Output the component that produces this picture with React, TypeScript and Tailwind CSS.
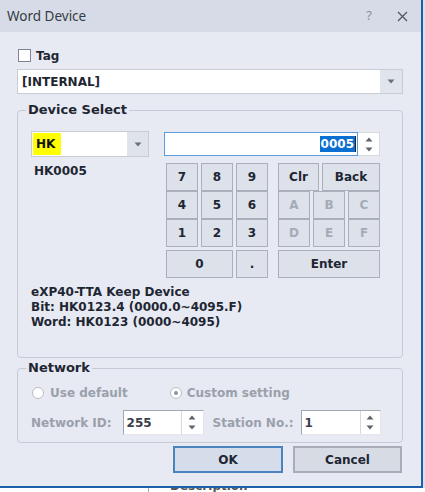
import React from "react";

const Down = ({ c = "#6b6f77" }: { c?: string }) => (
  <svg width="8" height="5" viewBox="0 0 8 5"><path d="M0.5 0.5 L7.5 0.5 L4 4.5 Z" fill={c} /></svg>
);
const Up = ({ c = "#6b6f77" }: { c?: string }) => (
  <svg width="8" height="5" viewBox="0 0 8 5"><path d="M0.5 4.5 L7.5 4.5 L4 0.5 Z" fill={c} /></svg>
);

const Key = ({ children, disabled, className = "" }: { children: React.ReactNode; disabled?: boolean; className?: string }) => (
  <div
    className={`h-[28px] flex items-center justify-center border border-[#a9afbb] bg-[#dce1ea] text-[12px] font-bold ${
      disabled ? "text-[#a5abb6]" : "text-[#1f2633]"
    } ${className}`}
  >
    {children}
  </div>
);

const Spinner = ({ w }: { w: string }) => (
  <div className={`${w} h-full bg-white border-l border-[#d4d8df] flex flex-col items-center justify-center gap-[5px]`}>
    <Up c="#5f636b" />
    <Down c="#5f636b" />
  </div>
);

export default function App() {
  return (
    <div className="w-[425px] h-[492px] bg-white flex flex-col overflow-hidden font-['DejaVu_Sans',sans-serif] text-[#1f2633]">
      <div className="flex h-[488px] shrink-0">
        <div className="w-[423px] h-[488px] bg-[#e7eaf2] border-r-2 border-b-2 border-[#1d5fa8] flex flex-col">
          {/* Title bar */}
          <div className="h-[32px] bg-[#d6dbe7] flex items-center shrink-0">
            <span className="pl-[7px] font-['Noto_Sans',sans-serif] text-[13.5px] text-[#353b44]">Word Device</span>
            <span className="ml-auto w-[16px] text-center font-['Noto_Sans',sans-serif] text-[13px] text-[#8c9099]">?</span>
            <div className="ml-[14px] w-[22px] mr-[8px] flex items-center justify-center">
              <svg width="11" height="11" viewBox="0 0 11 11">
                <path d="M1 1 L10 10 M10 1 L1 10" stroke="#555a62" strokeWidth="1.4" />
              </svg>
            </div>
          </div>

          <div className="pl-[17px] pr-[18px] flex flex-col">
            {/* Tag */}
            <div className="mt-[16px] h-[15px] flex items-center">
              <div className="ml-[1px] w-[13px] h-[13px] bg-white border border-[#7e8591]" />
              <span className="ml-[5px] text-[12px] font-bold">Tag</span>
            </div>

            {/* Internal combo */}
            <div className="mt-[6px] h-[25px] bg-white border border-[#c7ccd5] flex items-stretch">
              <span className="pl-[4px] self-center text-[12px] font-bold">[INTERNAL]</span>
              <div className="ml-auto w-[22px] bg-[#e0e4ec] flex items-center justify-center">
                <Down />
              </div>
            </div>

            {/* Device Select */}
            <fieldset className="mt-[8px] h-[256px] border border-[#c5cad4] rounded-[4px]">
              <legend className="ml-[8px] px-[2px] text-[13px] leading-[16px] font-bold">Device Select</legend>
              <div className="pl-[13px] pt-[13px] flex flex-col">
                <div className="flex">
                  <div className="w-[118px] flex flex-col">
                    <div className="h-[26px] bg-white border border-[#c8ccd5] flex items-stretch">
                      <div className="ml-[1px] my-[1px] w-[28px] bg-[#ffff00] flex items-center pl-[3px]">
                        <span className="text-[12px] font-bold text-[#111]">HK</span>
                      </div>
                      <div className="ml-auto w-[21px] bg-[#dfe3eb] flex items-center justify-center">
                        <Down />
                      </div>
                    </div>
                    <div className="mt-[7px] pl-[3px] text-[12px] leading-[15px] font-bold">HK0005</div>
                  </div>

                  <div className="ml-[15px] w-[216px] flex flex-col">
                    <div className="mt-[1px] h-[24px] flex">
                      <div className="w-[194px] bg-white border border-[#5b9be0] flex items-center justify-end pr-[1px]">
                        <span className="bg-[#0a6fd0] text-white text-[12px] font-bold leading-[16px] px-[1px]">0005</span>
                        <div className="w-[1px] h-[16px] bg-[#222]" />
                      </div>
                      <div className="w-[22px] h-full bg-white border border-l-0 border-[#d4d8df] flex flex-col items-center justify-center gap-[5px]">
                        <Up c="#5f636b" />
                        <Down c="#5f636b" />
                      </div>
                    </div>

                    <div className="mt-[7px] ml-[2px] flex gap-[10px]">
                      <div className="w-[102px] grid grid-cols-[32px_32px_32px] gap-x-[3px]">
                        <Key>7</Key>
                        <Key>8</Key>
                        <Key>9</Key>
                        <Key>4</Key>
                        <Key>5</Key>
                        <Key>6</Key>
                        <Key>1</Key>
                        <Key>2</Key>
                        <Key>3</Key>
                        <Key className="col-span-2 mt-[3px]">0</Key>
                        <Key className="mt-[3px]">.</Key>
                      </div>
                      <div className="w-[102px] grid grid-cols-[32px_32px_32px] gap-x-[3px]">
                        <div className="col-span-3 flex gap-[3px]">
                          <Key className="w-[41px]">Clr</Key>
                          <Key className="w-[58px]">Back</Key>
                        </div>
                        <Key disabled>A</Key>
                        <Key disabled>B</Key>
                        <Key disabled>C</Key>
                        <Key disabled>D</Key>
                        <Key disabled>E</Key>
                        <Key disabled>F</Key>
                        <Key className="col-span-3 mt-[3px]">Enter</Key>
                      </div>
                    </div>
                  </div>
                </div>

                <div className="mt-[7px] text-[12px] leading-[15px] font-bold">
                  <div>eXP40-TTA Keep Device</div>
                  <div>Bit: HK0123.4 (0000.0~4095.F)</div>
                  <div>Word: HK0123 (0000~4095)</div>
                </div>
              </div>
            </fieldset>

            {/* Network */}
            <fieldset className="mt-[2px] h-[83px] border border-[#c5cad4] rounded-[4px]">
              <legend className="ml-[8px] px-[2px] text-[13px] leading-[16px] font-bold">Network</legend>
              <div className="pl-[13px] flex flex-col">
                <div className="mt-[9px] h-[16px] flex items-center text-[12px] font-bold text-[#9aa0ab]">
                  <div className="ml-[1px] w-[12px] h-[12px] rounded-full bg-white border border-[#b9bec7]" />
                  <span className="ml-[6px]">Use default</span>
                  <div className="ml-[42px] w-[12px] h-[12px] rounded-full bg-white border border-[#b9bec7] flex items-center justify-center">
                    <div className="w-[4px] h-[4px] rounded-full bg-[#8f95a0]" />
                  </div>
                  <span className="ml-[5px]">Custom setting</span>
                </div>
                <div className="mt-[9px] h-[25px] flex items-center text-[12px] font-bold">
                  <span className="text-[#9aa0ab]">Network ID:</span>
                  <div className="ml-[11px] w-[81px] h-full flex border border-[#a3a9b3] border-r-[#e3e6ec] border-b-[#e3e6ec]">
                    <div className="flex-1 bg-white flex items-center pl-[3px] text-[#3a404a]">255</div>
                    <Spinner w="w-[22px]" />
                  </div>
                  <span className="ml-[9px] text-[#9aa0ab]">Station No.:</span>
                  <div className="ml-[7px] w-[80px] h-full flex border border-[#a3a9b3] border-r-[#e3e6ec] border-b-[#e3e6ec]">
                    <div className="flex-1 bg-white flex items-center pl-[3px] text-[#3a404a]">1</div>
                    <Spinner w="w-[20px]" />
                  </div>
                </div>
              </div>
            </fieldset>

            {/* Buttons */}
            <div className="mt-[3px] mr-[1px] flex justify-end gap-[10px]">
              <div className="w-[110px] h-[27px] bg-[#d5dcea] border-2 border-[#4a83bd] flex items-center justify-center text-[12px] font-bold">
                OK
              </div>
              <div className="w-[109px] h-[27px] bg-[#d6dbe4] border-2 border-[#a8aeb9] flex items-center justify-center text-[12px] font-bold">
                Cancel
              </div>
            </div>
          </div>
        </div>
        <div className="w-[2px] bg-[#d8e1ed]" />
      </div>
      <div className="h-[4px] flex">
        <div className="w-[149px] h-full border-r border-[#a7abb2]" />
        <div className="ml-[21px] h-full overflow-hidden">
          <span className="block -mt-[8px] text-[12px] leading-[12px] font-bold text-[#555]">Description</span>
        </div>
      </div>
    </div>
  );
}
